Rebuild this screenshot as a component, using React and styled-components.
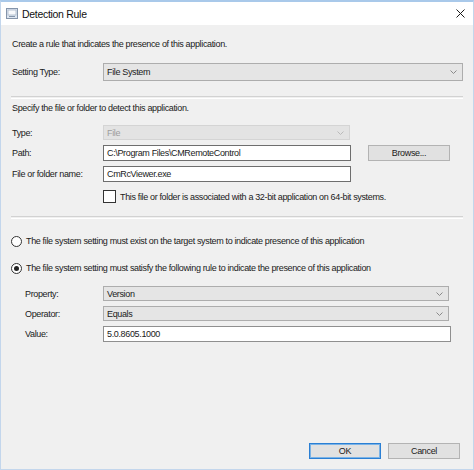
import styled, { createGlobalStyle } from 'styled-components';

const GlobalStyle = createGlobalStyle`
  html, body {
    margin: 0;
    padding: 0;
    background: #ffffff;
  }

  body {
    font-family: "Liberation Sans", Arial, sans-serif;
    font-size: 9px;
    letter-spacing: -0.35px;
    color: #1a1a1a;
  }
`;

const Chevron = () => (
  <svg width="7" height="4" viewBox="0 0 7 4">
    <path d="M0.5 0.5 L3.5 3.5 L6.5 0.5" fill="none" stroke="#8a8a8a" strokeWidth="1" />
  </svg>
);

const DialogIcon = () => (
  <svg width="12" height="11" viewBox="0 0 12 11">
    <rect x="0.5" y="0.5" width="11" height="10" fill="#dde6f1" stroke="#8494aa" />
    <rect x="2" y="2" width="8" height="5" fill="#f7f9fc" stroke="#a9b6c8" strokeWidth="0.8" />
    <rect x="3" y="8" width="6" height="1" fill="#8494aa" />
  </svg>
);

const CloseIcon = () => (
  <svg width="9" height="9" viewBox="0 0 9 9">
    <path d="M0.5 0.5 L8.5 8.5 M8.5 0.5 L0.5 8.5" stroke="#1a1a1a" strokeWidth="1" />
  </svg>
);

const Select = ({ value, width, height, disabled }) => (
  <StyledSelect $width={width} $height={height} $disabled={disabled}>
    <span>{value}</span>
    <Chevron />
  </StyledSelect>
);

const DetectionRule = () => {
  return (
    <StyledWindow>
      <StyledTitleBar>
        <DialogIcon />
        <StyledTitle>Detection Rule</StyledTitle>
        <StyledClose>
          <CloseIcon />
        </StyledClose>
      </StyledTitleBar>

      <StyledBody>
        <StyledIntro>Create a rule that indicates the presence of this application.</StyledIntro>

        <StyledGrid $columns="79px 1fr" $top={12}>
          <StyledLabel>Setting Type:</StyledLabel>
          <Select value="File System" height={18} />
        </StyledGrid>

        <StyledSeparator $top={15} />

        <StyledIntro $top={2}>Specify the file or folder to detect this application.</StyledIntro>

        <StyledGrid $columns="79px 248px 87px" $top={10} $rowGap={5}>
          <StyledLabel>Type:</StyledLabel>
          <Select value="File" width={247} height={15} disabled />
          <span />
          <StyledLabel>Path:</StyledLabel>
          <StyledInput>C:\Program Files\CMRemoteControl</StyledInput>
          <StyledButton $side>Browse...</StyledButton>
          <StyledLabel>File or folder name:</StyledLabel>
          <StyledInput>CmRcViewer.exe</StyledInput>
        </StyledGrid>

        <StyledCheckRow>
          <StyledCheckbox />
          <span>This file or folder is associated with a 32-bit application on 64-bit systems.</span>
        </StyledCheckRow>

        <StyledSeparator $top={13} />

        <StyledRadioRow $top={15}>
          <StyledRadio />
          <span>The file system setting must exist on the target system to indicate presence of this application</span>
        </StyledRadioRow>
        <StyledRadioRow $top={13}>
          <StyledRadio $checked />
          <span>The file system setting must satisfy the following rule to indicate the presence of this application</span>
        </StyledRadioRow>

        <StyledGrid $columns="66px 348px" $top={11} $rowGap={5} $indent={13}>
          <StyledLabel>Property:</StyledLabel>
          <Select value="Version" width={346} height={15} />
          <StyledLabel>Operator:</StyledLabel>
          <Select value="Equals" width={346} height={15} />
          <StyledLabel>Value:</StyledLabel>
          <StyledInput $light>5.0.8605.1000</StyledInput>
        </StyledGrid>

        <StyledFooter>
          <StyledButton $primary>OK</StyledButton>
          <StyledButton>Cancel</StyledButton>
        </StyledFooter>
      </StyledBody>
    </StyledWindow>
  );
};

const StyledWindow = styled.div`
  width: 474px;
  height: 470px;
  box-sizing: border-box;
  display: flex;
  flex-direction: column;

  border: 1px solid #c3d6ec;
  border-top: 2px solid #a9c9ea;
  background-color: #f0f0f0;
`;

const StyledTitleBar = styled.div`
  height: 23px;
  display: flex;
  align-items: center;
  padding: 0 8px 0 5px;

  background-color: #ffffff;

  svg {
    flex: none;
  }
`;

const StyledTitle = styled.div`
  margin-left: 4px;
  font-size: 10.5px;
  letter-spacing: -0.3px;
  color: #111;
`;

const StyledClose = styled.div`
  margin-left: auto;
  display: flex;
`;

const StyledBody = styled.div`
  flex: 1;
  display: flex;
  flex-direction: column;
  padding: 12px 10px 10px 11px;
`;

const StyledIntro = styled.div`
  height: 14px;
  line-height: 14px;
  margin-top: ${({ $top }) => $top || 0}px;
`;

const StyledGrid = styled.div`
  display: grid;
  grid-template-columns: ${({ $columns }) => $columns};
  column-gap: 12px;
  row-gap: ${({ $rowGap }) => $rowGap || 0}px;
  align-items: center;
  margin-top: ${({ $top }) => $top || 0}px;
  padding-left: ${({ $indent }) => $indent || 0}px;
`;

const StyledLabel = styled.div`
  white-space: nowrap;
`;

const StyledSelect = styled.div`
  box-sizing: border-box;
  width: ${({ $width }) => ($width ? `${$width}px` : 'auto')};
  height: ${({ $height }) => $height}px;
  display: flex;
  align-items: center;
  justify-content: space-between;
  padding: 0 5px 0 3px;

  border: 1px solid ${({ $disabled }) => ($disabled ? '#d4d4d4' : '#adadad')};
  background-color: ${({ $disabled }) => ($disabled ? '#e3e3e3' : '#e5e5e5')};
  color: ${({ $disabled }) => ($disabled ? '#9d9d9d' : '#1a1a1a')};

  svg {
    opacity: ${({ $disabled }) => ($disabled ? 0.45 : 1)};
  }
`;

const StyledInput = styled.div`
  box-sizing: border-box;
  height: 16px;
  display: flex;
  align-items: center;
  padding: 0 3px;

  border: 1px solid ${({ $light }) => ($light ? '#8f8f8f' : '#6e6e6e')};
  background-color: #ffffff;
`;

const StyledButton = styled.div`
  box-sizing: border-box;
  width: ${({ $primary }) => ($primary ? 72 : 82)}px;
  height: 16px;
  display: flex;
  align-items: center;
  justify-content: center;
  justify-self: ${({ $side }) => ($side ? 'end' : 'auto')};

  border: 1px solid ${({ $primary }) => ($primary ? '#2a7fd4' : '#b3b3b3')};
  box-shadow: ${({ $primary }) => ($primary ? 'inset 0 0 0 1px #7bb3e6' : 'none')};
  background-color: #e1e1e1;
`;

const StyledSeparator = styled.div`
  height: 1px;
  margin: ${({ $top }) => $top}px 0 0 -1px;
  border-top: 1px solid #d2d2d2;
  border-bottom: 1px solid #ffffff;
`;

const StyledCheckRow = styled.div`
  display: flex;
  align-items: center;
  gap: 4px;
  margin: 8px 0 0 91px;
  height: 13px;
`;

const StyledCheckbox = styled.div`
  box-sizing: border-box;
  width: 13px;
  height: 13px;
  border: 1px solid #333;
  background-color: #ffffff;
`;

const StyledRadioRow = styled.div`
  display: flex;
  align-items: center;
  gap: 4px;
  height: 14px;
  margin: ${({ $top }) => $top}px 0 0 -1px;
`;

const StyledRadio = styled.div`
  box-sizing: border-box;
  width: 11px;
  height: 11px;
  border-radius: 50%;
  border: 1px solid #333;
  background-color: #ffffff;
  position: relative;

  &::after {
    content: '';
    display: ${({ $checked }) => ($checked ? 'block' : 'none')};
    position: absolute;
    inset: 2px;
    border-radius: 50%;
    background-color: #222;
  }
`;

const StyledFooter = styled.div`
  margin-top: auto;
  display: flex;
  justify-content: flex-end;
  gap: 7px;
  padding-right: 3px;

  & > div {
    width: 72px;
  }
`;

const App = () => (
  <>
    <GlobalStyle />
    <DetectionRule />
  </>
);

export default App;
